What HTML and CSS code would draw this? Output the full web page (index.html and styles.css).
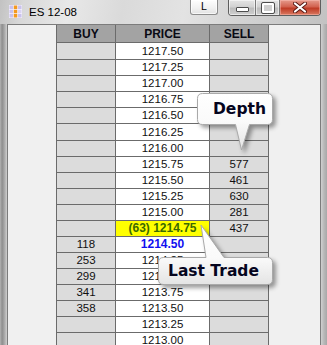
FILE: index.html
```html
<!DOCTYPE html>
<html>
<head>
<meta charset="utf-8">
<link rel="stylesheet" href="styles.css">
</head>
<body>
<div class="window">
  <div class="titlebar">
    <svg class="app-icon" width="13" height="13" viewBox="0 0 13 13">
      <rect x="0" y="0" width="13" height="13" fill="#f4f0ff"/>
      <rect x="0.5" y="0.5" width="3.5" height="3.5" fill="#c9c2ec"/>
      <rect x="0.5" y="4.75" width="3.5" height="3.5" fill="#c9c2ec"/>
      <rect x="0.5" y="9" width="3.5" height="3.5" fill="#c9c2ec"/>
      <rect x="4.75" y="0.5" width="3.5" height="3.5" fill="#f39a1e"/>
      <rect x="4.75" y="4.75" width="3.5" height="3.5" fill="#f39a1e"/>
      <rect x="4.75" y="9" width="3.5" height="3.5" fill="#f39a1e"/>
      <rect x="9" y="0.5" width="3.5" height="3.5" fill="#c9c2ec"/>
      <rect x="9" y="4.75" width="3.5" height="3.5" fill="#d9d3f2"/>
      <rect x="9" y="9" width="3.5" height="3.5" fill="#c9c2ec"/>
    </svg>
    <span class="title">ES 12-08</span>
    <div class="lbtn">L</div>
    <div class="caption">
      <div class="cbtn min"><span class="min-glyph"></span></div>
      <div class="cbtn max"><span class="max-glyph"></span></div>
      <div class="cbtn close">
        <svg width="14" height="11" viewBox="0 0 14 11">
          <path d="M2,1.5 L12,9.5 M12,1.5 L2,9.5" stroke="#5a1a14" stroke-width="4" stroke-linecap="round"/>
          <path d="M2,1.5 L12,9.5 M12,1.5 L2,9.5" stroke="#ffffff" stroke-width="2.2" stroke-linecap="round"/>
        </svg>
      </div>
    </div>
  </div>
  <div class="frame">
    <div class="edge-left"></div>
    <div class="client">
      <div class="side"></div>
      <div class="ladder">
        <div class="hd">BUY</div><div class="hd">PRICE</div><div class="hd">SELL</div>
        <div class="c q"></div><div class="c p">1217.50</div><div class="c q"></div>
        <div class="c q"></div><div class="c p">1217.25</div><div class="c q"></div>
        <div class="c q"></div><div class="c p">1217.00</div><div class="c q"></div>
        <div class="c q"></div><div class="c p">1216.75</div><div class="c q"></div>
        <div class="c q"></div><div class="c p">1216.50</div><div class="c q"></div>
        <div class="c q"></div><div class="c p">1216.25</div><div class="c q"></div>
        <div class="c q"></div><div class="c p">1216.00</div><div class="c q"></div>
        <div class="c q"></div><div class="c p">1215.75</div><div class="c q">577</div>
        <div class="c q"></div><div class="c p">1215.50</div><div class="c q">461</div>
        <div class="c q"></div><div class="c p">1215.25</div><div class="c q">630</div>
        <div class="c q"></div><div class="c p">1215.00</div><div class="c q">281</div>
        <div class="c q"></div><div class="c p last">(63) 1214.75</div><div class="c q">437</div>
        <div class="c q">118</div><div class="c p bid">1214.50</div><div class="c q"></div>
        <div class="c q">253</div><div class="c p">1214.25</div><div class="c q"></div>
        <div class="c q">299</div><div class="c p">1214.00</div><div class="c q"></div>
        <div class="c q">341</div><div class="c p">1213.75</div><div class="c q"></div>
        <div class="c q">358</div><div class="c p">1213.50</div><div class="c q"></div>
        <div class="c q"></div><div class="c p">1213.25</div><div class="c q"></div>
        <div class="c q"></div><div class="c p">1213.00</div><div class="c q"></div>
        <div class="c q"></div><div class="c p">1212.75</div><div class="c q"></div>
      </div>
      <div class="side side-right"></div>
    </div>
    <div class="edge-right"></div>
  </div>

  <div class="callout depth">
    <svg class="bubble" width="92" height="68" viewBox="0 0 92 68">
      <defs>
        <linearGradient id="gDepth" x1="0" y1="0" x2="0" y2="1">
          <stop offset="0" stop-color="#ffffff"/>
          <stop offset="0.5" stop-color="#fafafa"/>
          <stop offset="1" stop-color="#e4e4e4"/>
        </linearGradient>
      </defs>
      <path d="M10.5,5.5 H75.5 Q80.5,5.5 80.5,10.5 V31.5 Q80.5,36.5 75.5,36.5 H57.5 L49.5,62 L43.5,36.5 H10.5 Q5.5,36.5 5.5,31.5 V10.5 Q5.5,5.5 10.5,5.5 Z" fill="url(#gDepth)" stroke="#a9a9a9" stroke-width="1"/>
    </svg>
    <div class="label depth-label">Depth</div>
  </div>

  <div class="callout trade">
    <svg class="bubble" width="130" height="74" viewBox="0 0 130 74">
      <defs>
        <linearGradient id="gTrade" x1="0" y1="0" x2="0" y2="1">
          <stop offset="0" stop-color="#ffffff"/>
          <stop offset="0.55" stop-color="#fafafa"/>
          <stop offset="1" stop-color="#e4e4e4"/>
        </linearGradient>
      </defs>
      <path d="M10.5,37.5 H53 L48,5 L71,37.5 H114.5 Q119.5,37.5 119.5,42.5 V59.5 Q119.5,64.5 114.5,64.5 H10.5 Q5.5,64.5 5.5,59.5 V42.5 Q5.5,37.5 10.5,37.5 Z" fill="url(#gTrade)" stroke="#a9a9a9" stroke-width="1"/>
    </svg>
    <div class="label trade-label">Last Trade</div>
  </div>
</div>
</body>
</html>
```

FILE: styles.css
```css
html, body {
  margin: 0;
  padding: 0;
  background: #d0d0d0;
}

.window {
  position: relative;
  width: 327px;
  height: 345px;
  overflow: hidden;
  display: flex;
  flex-direction: column;
  background: linear-gradient(100deg, #c2c2c2 0%, #d8d8d8 6%, #e8e8e8 18%, #dadada 32%, #e3e3e3 48%, #d4d4d4 62%, #c6c6c6 80%, #b9b9b9 100%);
  font-family: "Liberation Sans", Arial, sans-serif;
}

/* ---------- title bar ---------- */
.titlebar {
  height: 24px;
  flex: 0 0 24px;
  display: flex;
  align-items: flex-start;
}

.app-icon {
  margin-left: 9px;
  margin-top: 5px;
  flex: 0 0 auto;
}

.title {
  margin-left: 7px;
  margin-top: 5px;
  font-family: "Liberation Sans", Arial, sans-serif;
  font-size: 11.5px;
  line-height: 14px;
  color: #000;
}

.lbtn {
  margin-left: auto;
  width: 26px;
  height: 14px;
  border: 1px solid #8c8c8c;
  border-top: none;
  border-radius: 0 0 3px 3px;
  background: linear-gradient(#fefefe, #f2f2f2 55%, #e2e2e2);
  box-shadow: inset 0 0 0 1px rgba(255,255,255,0.7);
  font-size: 10.5px;
  line-height: 13px;
  text-align: center;
  color: #000;
}

.caption {
  margin-left: 10px;
  margin-right: 6px;
  width: 93px;
  height: 16px;
  display: flex;
  border: 1px solid #5e5e5e;
  border-top: none;
  border-radius: 0 0 4px 4px;
  overflow: hidden;
  box-sizing: border-box;
}

.cbtn {
  height: 100%;
  display: flex;
  align-items: center;
  justify-content: center;
  background: linear-gradient(#e4e4e4, #d2d2d2 45%, #bcbcbc 55%, #cfcfcf);
  box-shadow: inset 0 0 0 1px rgba(255,255,255,0.55);
}

.min {
  width: 26px;
  border-right: 1px solid #7a7a7a;
}

.max {
  width: 23px;
  border-right: 1px solid #7a7a7a;
}

.close {
  flex: 1;
  background: linear-gradient(#e59a8c, #d2624f 45%, #bf3b25 55%, #d97a62);
  box-shadow: inset 0 0 0 1px rgba(255,200,190,0.45);
}

.min-glyph {
  width: 11px;
  height: 3px;
  margin-top: 3px;
  background: #fff;
  border: 1px solid #4d4d4d;
  border-radius: 1px;
}

.max-glyph {
  width: 8px;
  height: 6px;
  background: #cfcfcf;
  border: 2px solid #fff;
  outline: 1px solid #4d4d4d;
  border-radius: 1px;
}

/* ---------- frame + client ---------- */
.frame {
  flex: 1;
  display: flex;
  min-height: 0;
}

.edge-left {
  width: 7px;
  flex: 0 0 7px;
  background: linear-gradient(to right, #b4b4b4, #8e8e8e 30%, #a6a6a6 60%, #cfcfcf);
}

.edge-right {
  width: 6px;
  flex: 0 0 6px;
  background: linear-gradient(to right, #d0d0d0, #b8b8b8 50%, #a8a8a8);
}

.client {
  flex: 1;
  display: flex;
  border: 1px solid #7c7c7c;
  border-bottom: none;
  background: #f0f0f0;
  overflow: hidden;
}

.side {
  width: 48px;
  flex: 0 0 48px;
  background: #f0f0f0;
}

.side-right {
  width: auto;
  flex: 1;
}

.ladder {
  display: grid;
  grid-template-columns: 58px 93px 58px;
  grid-template-rows: 17px 16px 15px 15px 15px 15px 16px repeat(15, 15px);
  column-gap: 1px;
  row-gap: 1px;
  padding: 0 1px;
  background: #6b6b6b;
  align-content: start;
  margin-top: -1px;
  border-top: 1px solid #6b6b6b;
}

.hd {
  background: #a3a3a3;
  font-weight: bold;
  font-size: 12px;
  color: #0a0a14;
  display: flex;
  align-items: center;
  justify-content: center;
  padding-top: 1px;
  box-sizing: border-box;
}

.c {
  font-size: 11.5px;
  color: #101010;
  display: flex;
  align-items: center;
  justify-content: center;
  line-height: 13px;
}

.q {
  background: #dcdcdc;
}

.p {
  background: #ffffff;
}

.last {
  background: #ffff00;
  color: #3b6a00;
  font-weight: bold;
  font-size: 12px;
}

.bid {
  color: #1010f0;
  font-weight: bold;
  font-size: 12px;
}

/* ---------- callouts ---------- */
.callout {
  position: absolute;
}

.callout .bubble {
  position: absolute;
  left: 0;
  top: 0;
  filter: drop-shadow(3px 3px 2px rgba(0,0,0,0.38));
}

.depth {
  left: 192px;
  top: 88px;
  width: 92px;
  height: 68px;
}

.trade {
  left: 153px;
  top: 220px;
  width: 130px;
  height: 74px;
}

.label {
  position: relative;
  font-family: "DejaVu Sans", Verdana, sans-serif;
  font-weight: bold;
  font-size: 15.5px;
  color: #05051e;
  display: flex;
  align-items: center;
  box-sizing: border-box;
}

.depth-label {
  margin-left: 6px;
  margin-top: 6px;
  width: 74px;
  height: 30px;
  padding-left: 15px;
}

.trade-label {
  margin-left: 6px;
  margin-top: 38px;
  width: 113px;
  height: 26px;
  padding-left: 9px;
}
```
